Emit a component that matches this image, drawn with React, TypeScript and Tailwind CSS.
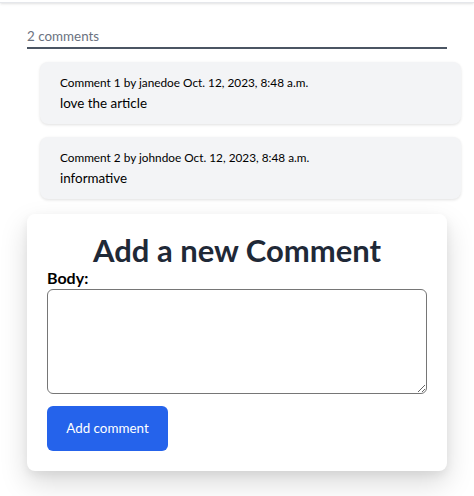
import React from "react";

const font = { fontFamily: 'Lato, "Noto Sans", sans-serif' };

export default function App() {
  const comments = [
    { n: 1, user: "janedoe", date: "Oct. 12, 2023, 8:48 a.m.", body: "love the article" },
    { n: 2, user: "johndoe", date: "Oct. 12, 2023, 8:48 a.m.", body: "informative" },
  ];
  return (
    <div className="w-[474px] h-[496px] bg-white overflow-hidden font-['Lato',sans-serif]" style={font}>
      <div className="h-[3px] border-b border-gray-200 shadow-sm" />
      <div className="px-[27px] pt-[24px]">
        <div className="border-b-2 border-[#4b5563] text-[13.4px] leading-[19px] text-[#6b7280] pb-[1px]">
          2 comments
        </div>
        <div className="ml-[13px] mr-[-14px] mt-[13px] flex flex-col gap-[13px]">
          {comments.map((c) => (
            <div key={c.n} className="bg-[#f3f4f6] rounded-lg shadow-[0_1px_3px_rgba(0,0,0,0.12)] px-5 pt-[11px] pb-[11px]">
              <div className="text-[11.8px] leading-[20px] text-black">
                Comment {c.n} by {c.user} {c.date}
              </div>
              <div className="text-[13.4px] leading-[20px] text-black">{c.body}</div>
            </div>
          ))}
        </div>
        <div className="mt-[15px] bg-white rounded-lg shadow-[0_12px_28px_rgba(0,0,0,0.15),0_4px_10px_rgba(0,0,0,0.06)] px-5 pt-[17px] pb-[20px]">
          <h2 className="text-center text-[31px] leading-[38px] font-bold text-[#1f2937]">
            Add a new Comment
          </h2>
          <label className="block text-[16px] leading-[18px] font-bold text-black">Body:</label>
          <textarea className="block w-full h-[105px] mt-[2px] border border-[#767676] rounded-md resize-y" />
          <button className="mt-[12px] bg-[#2563eb] text-white text-[13.4px] rounded-md h-[45px] w-[121px]">
            Add comment
          </button>
        </div>
      </div>
    </div>
  );
}
